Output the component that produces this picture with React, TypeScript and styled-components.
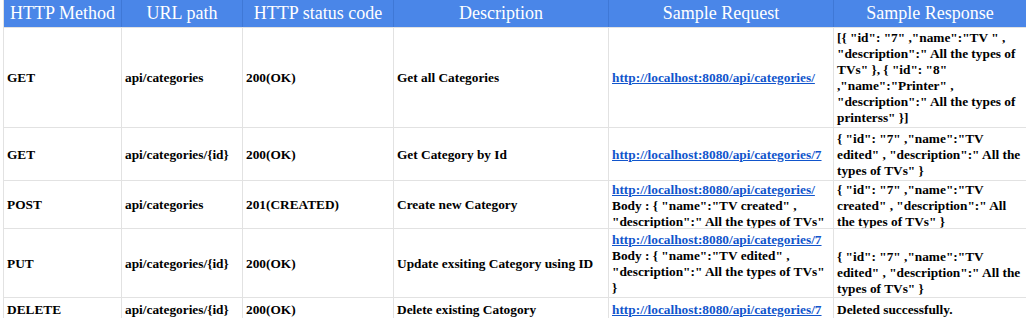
import styled, { createGlobalStyle } from "styled-components";

const GlobalStyle = createGlobalStyle`
  html, body {
    margin: 0;
    padding: 0;
    background: #ffffff;
  }
  body {
    font-family: "Liberation Serif", "DejaVu Serif", serif;
  }
`;

type Row = {
  method: string;
  path: string;
  status: string;
  description: string;
  url: string;
  body?: string;
  response: string;
  responseAlign?: "center" | "end";
  height: number;
};

const headers = [
  "HTTP Method",
  "URL path",
  "HTTP status code",
  "Description",
  "Sample Request",
  "Sample Response",
];

const edited = '{ "id": "7" ,"name":"TV edited" , "description":" All the types of TVs" }';

const rows: Row[] = [
  {
    method: "GET",
    path: "api/categories",
    status: "200(OK)",
    description: "Get all Categories",
    url: "http://localhost:8080/api/categories/",
    response:
      '[{ "id": "7" ,"name":"TV " , "description":" All the types of TVs" }, { "id": "8" ,"name":"Printer" , "description":" All the types of printerss" }]',
    height: 99,
  },
  {
    method: "GET",
    path: "api/categories/{id}",
    status: "200(OK)",
    description: "Get Category by Id",
    url: "http://localhost:8080/api/categories/7",
    response: edited,
    height: 52,
  },
  {
    method: "POST",
    path: "api/categories",
    status: "201(CREATED)",
    description: "Create new Category",
    url: "http://localhost:8080/api/categories/",
    body: 'Body : { "name":"TV created" , "description":" All the types of TVs" }',
    response: '{ "id": "7" ,"name":"TV created" , "description":" All the types of TVs" }',
    height: 47,
  },
  {
    method: "PUT",
    path: "api/categories/{id}",
    status: "200(OK)",
    description: "Update exsiting Category using ID",
    url: "http://localhost:8080/api/categories/7",
    body: 'Body : { "name":"TV edited" , "description":" All the types of TVs" }',
    response: edited,
    responseAlign: "end",
    height: 68,
  },
  {
    method: "DELETE",
    path: "api/categories/{id}",
    status: "200(OK)",
    description: "Delete existing Catogory",
    url: "http://localhost:8080/api/categories/7",
    response: "Deleted successfully.",
    height: 22,
  },
];

const columns = "117px 120px 150px 214px 224px 192px";

const Sheet = styled.div`
  display: flex;
  flex-direction: column;
  gap: 1px;
  margin-left: 3px;
  padding-left: 1px;
  width: max-content;
  background: #e2e2e2;
`;

const HeaderRow = styled.div`
  display: grid;
  grid-template-columns: ${columns};
  column-gap: 1px;
  height: 27px;
  background: #3f78d6;
`;

const HeaderCell = styled.div`
  background: #4a86e8;
  color: #ffffff;
  font-family: "Liberation Serif", "DejaVu Serif", serif;
  font-size: 18px;
  line-height: 27px;
  text-align: center;
  white-space: nowrap;
  overflow: hidden;
`;

const BodyRow = styled.div<{ $height: number }>`
  display: grid;
  grid-template-columns: ${columns};
  column-gap: 1px;
  height: ${(p) => p.$height}px;
`;

const Cell = styled.div<{ $align?: "center" | "end" }>`
  display: flex;
  flex-direction: column;
  justify-content: ${(p) => (p.$align === "end" ? "flex-end" : "safe center")};
  padding: 1px 3px 0;
  background: #ffffff;
  color: #000000;
  font-family: "Liberation Serif", "DejaVu Serif", serif;
  font-size: 13.33px;
  font-weight: 700;
  line-height: 16px;
  overflow: hidden;
`;

const Link = styled.a`
  color: #1155cc;
  text-decoration: underline;
  white-space: nowrap;
`;

export default function App() {
  return (
    <>
      <GlobalStyle />
      <Sheet>
        <HeaderRow>
          {headers.map((h) => (
            <HeaderCell key={h}>{h}</HeaderCell>
          ))}
        </HeaderRow>
        {rows.map((r, i) => (
          <BodyRow key={i} $height={r.height}>
            <Cell>{r.method}</Cell>
            <Cell>{r.path}</Cell>
            <Cell>{r.status}</Cell>
            <Cell>{r.description}</Cell>
            <Cell>
              <div>
                <Link href="#">{r.url}</Link>
              </div>
              {r.body && <div>{r.body}</div>}
            </Cell>
            <Cell $align={r.responseAlign}>
              <div>{r.response}</div>
            </Cell>
          </BodyRow>
        ))}
      </Sheet>
    </>
  );
}
